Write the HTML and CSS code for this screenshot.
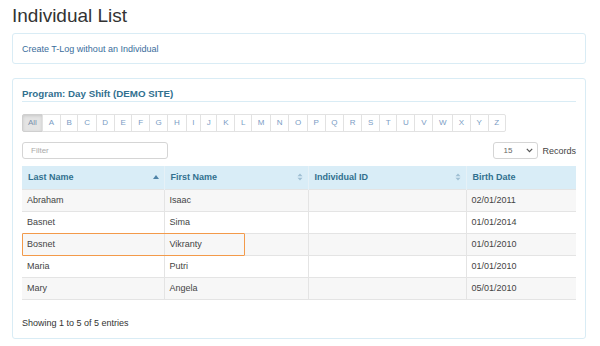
FILE: index.html
```html
<!DOCTYPE html>
<html>
<head>
<meta charset="utf-8">
<link rel="stylesheet" href="styles.css">
</head>
<body>
<h1 class="title">Individual List</h1>
<div class="panel link-panel"><a class="link">Create T-Log without an Individual</a></div>
<div class="panel main-panel">
  <h2 class="program">Program: Day Shift (DEMO SITE)</h2>
  <div class="letters">
    <span class="letter active">All</span><span class="letter">A</span><span class="letter">B</span><span class="letter">C</span><span class="letter">D</span><span class="letter">E</span><span class="letter">F</span><span class="letter">G</span><span class="letter">H</span><span class="letter">I</span><span class="letter">J</span><span class="letter">K</span><span class="letter">L</span><span class="letter">M</span><span class="letter">N</span><span class="letter">O</span><span class="letter">P</span><span class="letter">Q</span><span class="letter">R</span><span class="letter">S</span><span class="letter">T</span><span class="letter">U</span><span class="letter">V</span><span class="letter">W</span><span class="letter">X</span><span class="letter">Y</span><span class="letter">Z</span>
  </div>
  <div class="controls">
    <div class="filter">Filter</div>
    <div class="records">
      <div class="select"><span>15</span><svg class="chev" width="7" height="5" viewBox="0 0 7 5"><path d="M0.8 0.8 L3.5 3.6 L6.2 0.8" fill="none" stroke="#555" stroke-width="1.2"/></svg></div>
      <span class="records-label">Records</span>
    </div>
  </div>
  <div class="table-wrap">
    <table class="grid">
      <colgroup><col class="c1"><col class="c2"><col class="c3"><col class="c4"></colgroup>
      <thead>
        <tr>
          <th><div class="th-in">Last Name<svg class="sort" width="6" height="4" viewBox="0 0 6 4"><path d="M0 4 L3 0 L6 4Z" fill="#4f84a8"/></svg></div></th>
          <th><div class="th-in">First Name<svg class="sort" width="6" height="8" viewBox="0 0 6 8"><path d="M0.5 3.3 L3 0.5 L5.5 3.3Z M0.5 4.7 L3 7.5 L5.5 4.7Z" fill="#9fbfd3"/></svg></div></th>
          <th><div class="th-in">Individual ID<svg class="sort" width="6" height="8" viewBox="0 0 6 8"><path d="M0.5 3.3 L3 0.5 L5.5 3.3Z M0.5 4.7 L3 7.5 L5.5 4.7Z" fill="#9fbfd3"/></svg></div></th>
          <th><div class="th-in">Birth Date</div></th>
        </tr>
      </thead>
      <tbody>
        <tr class="odd"><td>Abraham</td><td>Isaac</td><td></td><td>02/01/2011</td></tr>
        <tr><td>Basnet</td><td>Sima</td><td></td><td>01/01/2014</td></tr>
        <tr class="odd"><td>Bosnet</td><td>Vikranty</td><td></td><td>01/01/2010</td></tr>
        <tr><td>Maria</td><td>Putri</td><td></td><td>01/01/2010</td></tr>
        <tr class="odd"><td>Mary</td><td>Angela</td><td></td><td>05/01/2010</td></tr>
      </tbody>
    </table>
    <div class="highlight"></div>
  </div>
  <div class="showing">Showing 1 to 5 of 5 entries</div>
</div>
</body>
</html>
```
FILE: styles.css
```css
* { box-sizing: border-box; }
body {
  margin: 0;
  padding: 0 14px 0 12px;
  font-family: "Liberation Sans", Arial, sans-serif;
  color: #333;
  background: #fff;
}
.title {
  margin: 5px 0 7px 0;
  font-size: 19px;
  line-height: 21px;
  font-weight: normal;
  color: #333;
}
.panel {
  border: 1px solid #d9ecf5;
  border-radius: 3px;
}
.link-panel {
  height: 31px;
  padding: 0 9px;
  display: flex;
  align-items: center;
}
.link {
  font-size: 9px;
  color: #3a6d9c;
}
.main-panel {
  margin-top: 14px;
  padding: 9px 9px 0 9px;
  height: 261px;
}
.program {
  margin: 0;
  font-size: 9.75px;
  line-height: 12px;
  font-weight: bold;
  color: #31708f;
  padding-bottom: 1px;
  border-bottom: 1px solid #d9ecf5;
}
.letters {
  margin-top: 12px;
  display: flex;
}
.letter {
  height: 18px;
  padding: 0 5.7px;
  font-size: 8px;
  line-height: 16px;
  color: #7a9cc4;
  border: 1px solid #e2e2e2;
  margin-left: -1px;
  background: #fff;
}
.letter:first-child { margin-left: 0; border-radius: 2px 0 0 2px; }
.letter:last-child { border-radius: 0 2px 2px 0; }
.letter.active {
  background: #e4e4e4;
  border-color: #cfcfcf;
  color: #7891ad;
  box-shadow: inset 0 1px 3px rgba(0,0,0,0.12);
  padding: 0 5px;
  width: 21px;
}
.controls {
  margin-top: 10px;
  display: flex;
  justify-content: space-between;
  align-items: center;
}
.filter {
  width: 146px;
  height: 17px;
  border: 1px solid #d5d5d5;
  border-radius: 3px;
  font-size: 8px;
  line-height: 15px;
  padding-left: 8px;
  color: #aaa;
}
.records {
  display: flex;
  align-items: center;
}
.select {
  width: 45px;
  height: 17px;
  border: 1px solid #d5d5d5;
  border-radius: 3px;
  font-size: 8px;
  color: #666;
  display: flex;
  align-items: center;
  justify-content: space-between;
  padding: 0 4px 0 9px;
}
.records-label {
  margin-left: 4px;
  font-size: 9px;
  color: #444;
}
.table-wrap {
  margin-top: 7px;
  position: relative;
}
.grid {
  width: 554px;
  border-collapse: collapse;
  table-layout: fixed;
  font-size: 9px;
}
.c1 { width: 142px; }
.c2 { width: 144px; }
.c3 { width: 158px; }
.c4 { width: 110px; }
.grid th {
  background: #d9edf7;
  color: #31708f;
  font-weight: bold;
  text-align: left;
  height: 23px;
  padding: 0 5px 0 6px;
  border-left: 1px solid #e6f1f7;
}
.grid th:first-child { border-left: none; }
.th-in {
  display: flex;
  justify-content: space-between;
  align-items: center;
}
.grid td {
  height: 22px;
  padding: 0 5px;
  border-top: 1px solid #e4e4e4;
  border-left: 1px solid #e4e4e4;
  color: #444;
}
.grid td:first-child { border-left: none; }
.grid tr.odd td { background: #f7f7f7; }
.grid tbody tr:last-child td { border-bottom: 1px solid #e4e4e4; }
.highlight {
  position: absolute;
  left: 0;
  top: 67px;
  width: 223px;
  height: 23px;
  border: 1.5px solid #f39a4a;
  border-radius: 1px;
}
.showing {
  margin-top: 18px;
  font-size: 9px;
  color: #333;
}
```
